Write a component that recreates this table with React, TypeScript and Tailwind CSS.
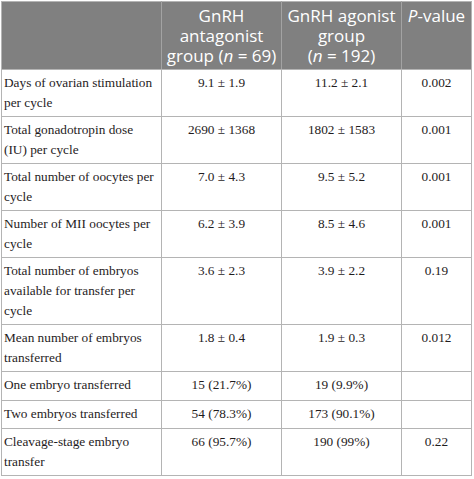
import React from "react";

const rows: { label: string; a: string; b: string; p: string; h?: string }[] = [
  { label: "Days of ovarian stimulation per cycle", a: "9.1 ± 1.9", b: "11.2 ± 2.1", p: "0.002" },
  { label: "Total gonadotropin dose (IU) per cycle", a: "2690 ± 1368", b: "1802 ± 1583", p: "0.001" },
  { label: "Total number of oocytes per cycle", a: "7.0 ± 4.3", b: "9.5 ± 5.2", p: "0.001" },
  { label: "Number of MII oocytes per cycle", a: "6.2 ± 3.9", b: "8.5 ± 4.6", p: "0.001" },
  { label: "Total number of embryos available for transfer per cycle", a: "3.6 ± 2.3", b: "3.9 ± 2.2", p: "0.19" },
  { label: "Mean number of embryos transferred", a: "1.8 ± 0.4", b: "1.9 ± 0.3", p: "0.012" },
  { label: "One embryo transferred", a: "15 (21.7%)", b: "19 (9.9%)", p: "", h: "h-[29px]" },
  { label: "Two embryos transferred", a: "54 (78.3%)", b: "173 (90.1%)", p: "", h: "h-[28px]" },
  { label: "Cleavage-stage embryo transfer", a: "66 (95.7%)", b: "190 (99%)", p: "0.22" },
];

export default function App() {
  return (
    <div className="bg-white w-[474px] h-[479px] pl-[1px] pt-[1px]">
      <table
        className="table-fixed border-collapse w-[470px] text-[#1f1c1d]"
        style={{ fontFamily: '"Liberation Serif", "Times New Roman", serif' }}
      >
        <colgroup>
          <col className="w-[160px]" />
          <col className="w-[120px]" />
          <col className="w-[120px]" />
          <col className="w-[70px]" />
        </colgroup>
        <thead>
          <tr
            className="bg-[#808080] text-white text-[17px] leading-[20px] h-[68px]"
            style={{ fontFamily: '"Open Sans", "Noto Sans", sans-serif' }}
          >
            <th className="border border-[#b4b4b4] border-r-[#a3a3a3] font-normal align-top pt-[4px] px-[4px]"></th>
            <th className="border border-[#b4b4b4] border-x-[#a3a3a3] font-normal align-top pt-[4px] px-[4px] text-center">
              GnRH antagonist group <span className="whitespace-nowrap">(<i>n</i> = 69)</span>
            </th>
            <th className="border border-[#b4b4b4] border-x-[#a3a3a3] font-normal align-top pt-[4px] px-[4px] text-center">
              GnRH agonist group <span className="whitespace-nowrap">(<i>n</i> = 192)</span>
            </th>
            <th className="border border-[#b4b4b4] border-l-[#a3a3a3] font-normal align-top pt-[4px] px-[2px] text-center">
              <i>P</i>-value
            </th>
          </tr>
        </thead>
        <tbody className="text-[13.3px] leading-[20px]">
          {rows.map((r, i) => (
            <tr key={i} className={r.h ?? ""}>
              <td className="border border-[#b4b4b4] align-top pt-[3px] pb-[3px] pl-[2px] pr-[2px]">{r.label}</td>
              <td className="border border-[#b4b4b4] align-top pt-[3px] pb-[3px] px-[2px] text-center">{r.a}</td>
              <td className="border border-[#b4b4b4] align-top pt-[3px] pb-[3px] px-[2px] text-center">{r.b}</td>
              <td className="border border-[#b4b4b4] align-top pt-[3px] pb-[3px] px-[2px] text-center">{r.p}</td>
            </tr>
          ))}
        </tbody>
      </table>
    </div>
  );
}
